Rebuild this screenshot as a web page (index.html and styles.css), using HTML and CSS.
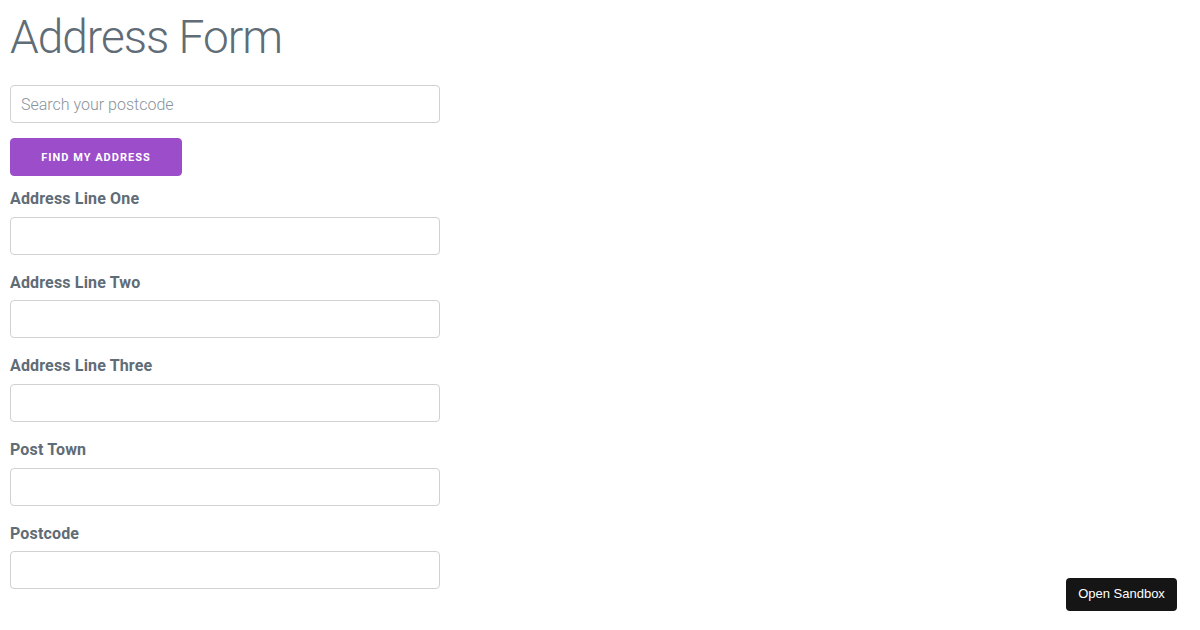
FILE: index.html
```html
<!DOCTYPE html>
<html lang="en">
<head>
<meta charset="utf-8">
<title>Address Form</title>
<link rel="stylesheet" href="styles.css">
</head>
<body>
<main class="page">
  <h1 class="title">Address Form</h1>
  <form class="form">
    <input class="field" type="text" placeholder="Search your postcode">
    <button class="btn" type="button">Find my address</button>
    <label class="label">Address Line One</label>
    <input class="field" type="text">
    <label class="label">Address Line Two</label>
    <input class="field" type="text">
    <label class="label">Address Line Three</label>
    <input class="field" type="text">
    <label class="label">Post Town</label>
    <input class="field" type="text">
    <label class="label">Postcode</label>
    <input class="field" type="text">
  </form>
</main>
<a class="sandbox" href="#">Open Sandbox</a>
</body>
</html>
```
FILE: styles.css
```css
html { font-size: 62.5%; }
body {
  margin: 0;
  padding: 10px;
  font-family: Roboto, "Helvetica Neue", Helvetica, Arial, sans-serif;
  font-size: 1.6rem;
  font-weight: 300;
  letter-spacing: .01em;
  line-height: 1.6;
  color: #606c76;
  background: #fff;
}
.title {
  margin: 0 0 2rem;
  font-size: 4.6rem;
  font-weight: 300;
  line-height: 1.2;
  letter-spacing: -.1rem;
}
.form {
  width: 430px;
  display: flex;
  flex-direction: column;
  align-items: flex-start;
}
.field {
  box-sizing: border-box;
  width: 100%;
  height: 3.8rem;
  padding: .6rem 1rem;
  margin: 0 0 1.5rem;
  border: .1rem solid #d1d1d1;
  border-radius: .4rem;
  background: transparent;
  font-family: inherit;
  font-size: 1.6rem;
  font-weight: 300;
  color: #606c76;
  outline: none;
}
.field::placeholder { color: #8a939b; opacity: 1; }
.btn {
  box-sizing: border-box;
  width: 172px;
  height: 3.8rem;
  padding: 0;
  margin: 0 0 1rem;
  border: .1rem solid #9b4dca;
  border-radius: .4rem;
  background: #9b4dca;
  color: #fff;
  font-family: inherit;
  font-size: 1.1rem;
  font-weight: 700;
  letter-spacing: .1rem;
  line-height: 3.8rem;
  text-transform: uppercase;
  cursor: pointer;
}
.label {
  display: block;
  margin-bottom: .5rem;
  font-size: 1.6rem;
  font-weight: 700;
}
.sandbox {
  position: fixed;
  right: 23px;
  bottom: 19px;
  box-sizing: border-box;
  height: 33px;
  width: 111px;
  display: flex;
  align-items: center;
  justify-content: center;
  background: #151515;
  color: #fff;
  border-radius: 4px;
  font-family: "Liberation Sans", Arial, sans-serif;
  font-size: 13px;
  letter-spacing: 0;
  text-decoration: none;
}
```
